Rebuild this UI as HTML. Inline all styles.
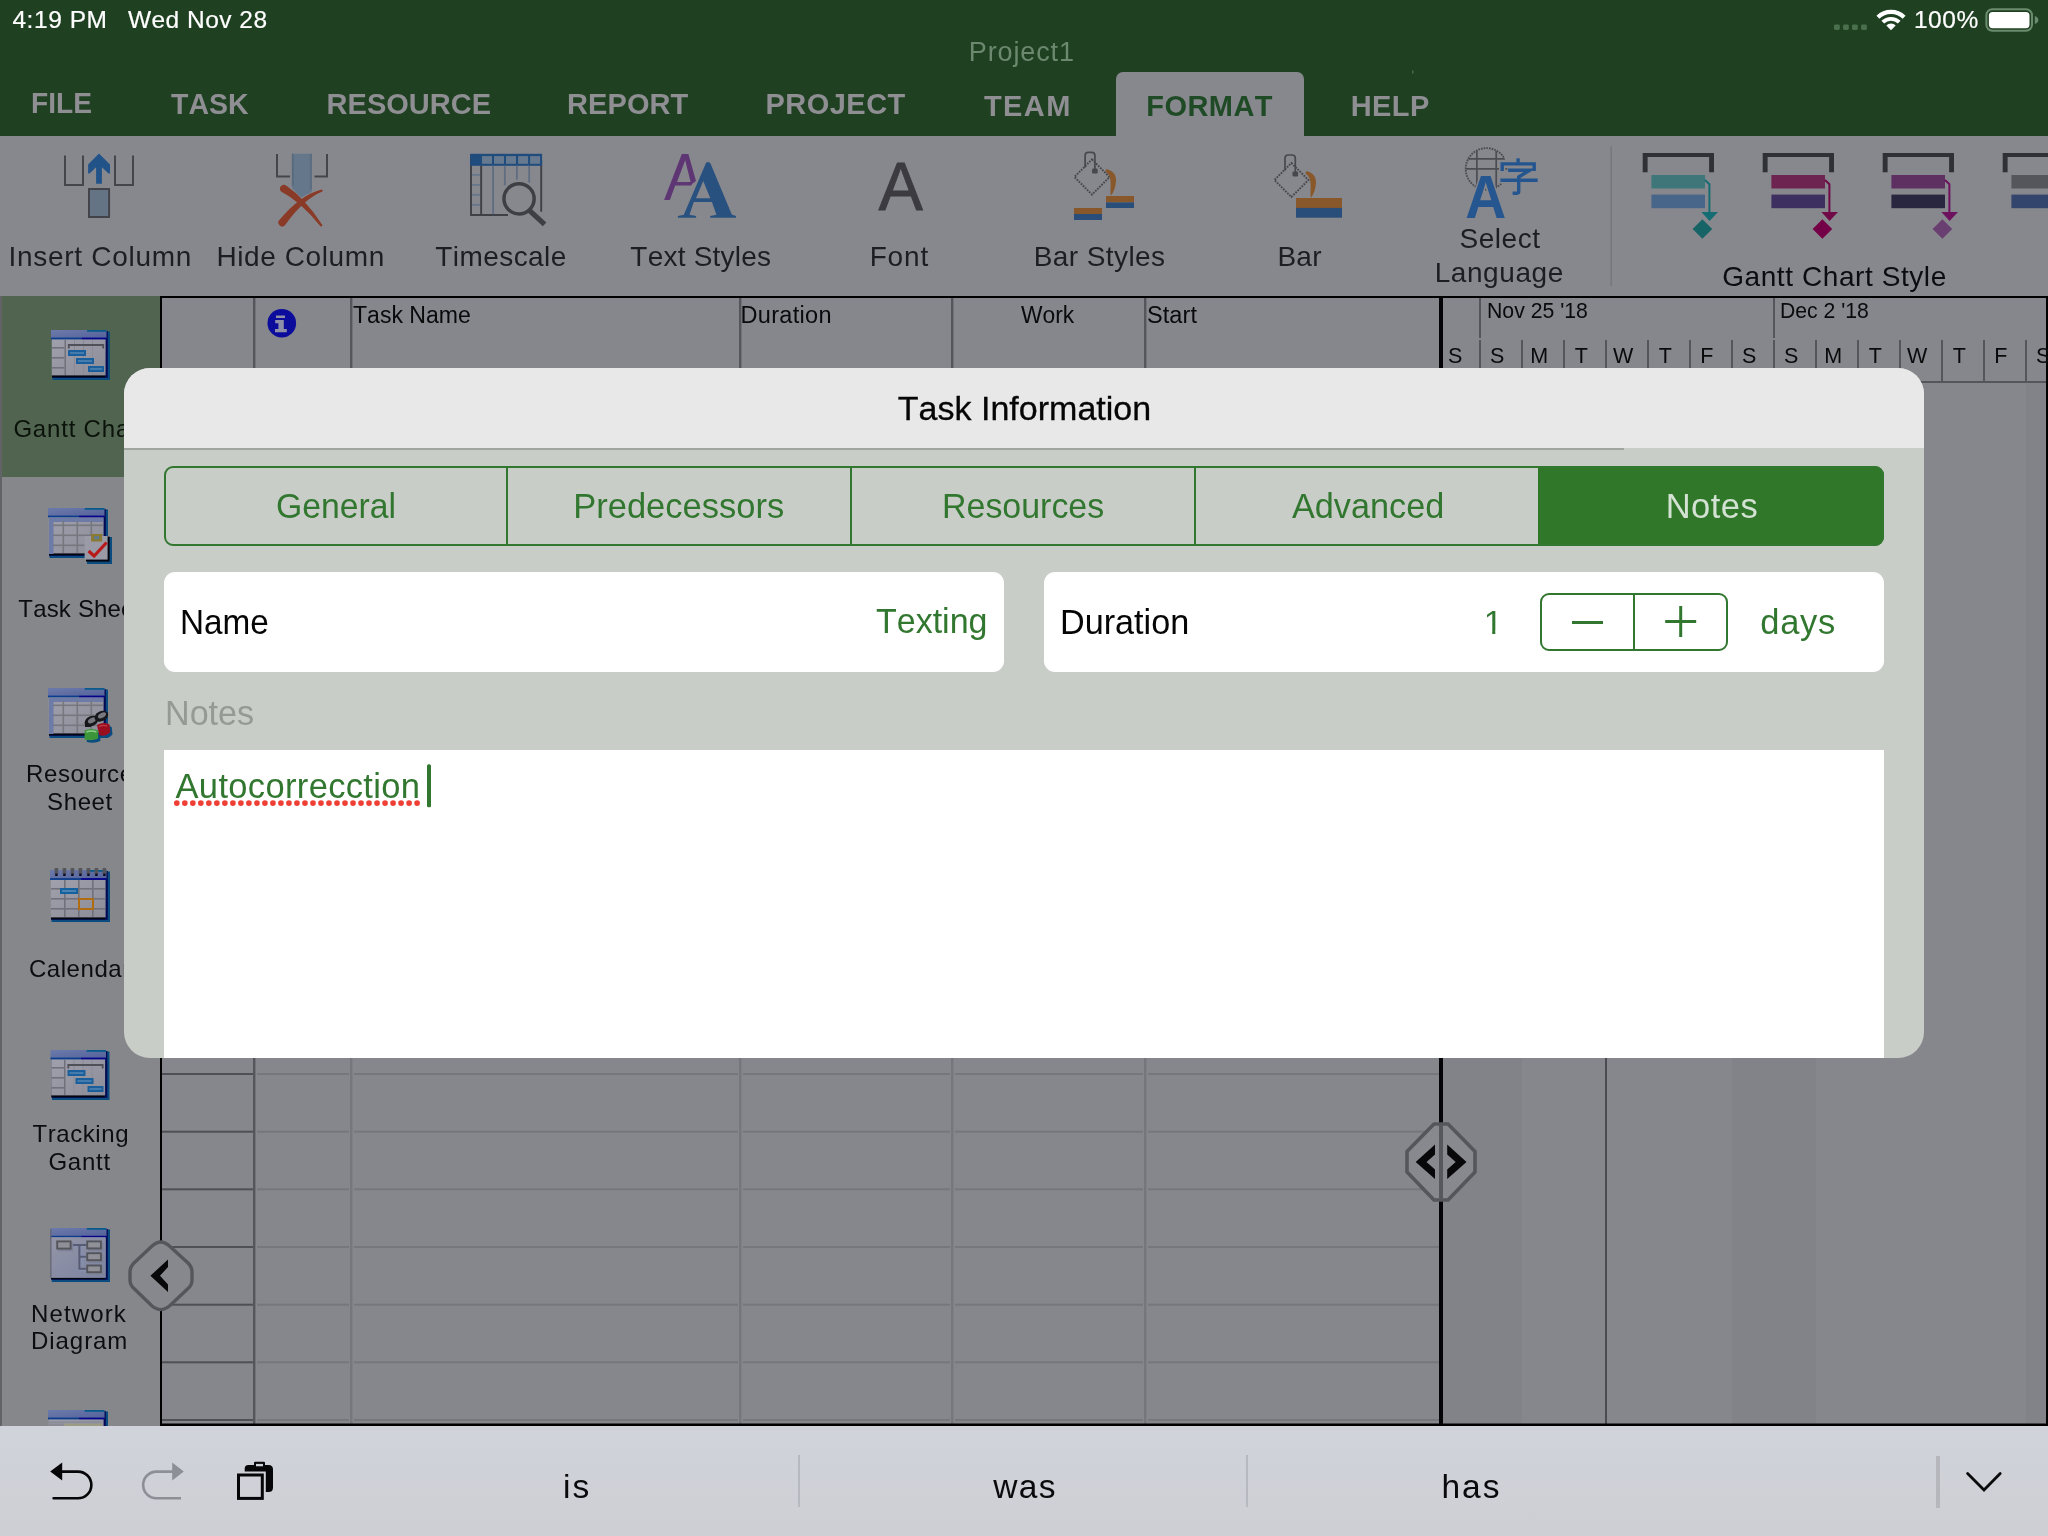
<!DOCTYPE html>
<html lang="en"><head><meta charset="utf-8">
<title>Project1 - Task Information</title>
<style>
html,body{margin:0;padding:0;background:#86878c;}
body{width:2048px;height:1536px;overflow:hidden;font-family:"Liberation Sans",sans-serif;font-kerning:none;}
#app{position:relative;width:2048px;height:1536px;overflow:hidden;background:#86878c;}
.t{position:absolute;white-space:nowrap;line-height:1;margin:0;padding:0;}
.abs{position:absolute;}
.layer{position:absolute;left:0;top:0;width:2048px;height:1536px;will-change:transform;}
svg{position:absolute;left:0;top:0;overflow:visible;}
#hdr{position:absolute;left:0;top:0;width:2048px;height:136px;background:#1f4122;}
#fmt{position:absolute;left:1116px;top:72px;width:188px;height:66px;background:#87888d;border-radius:7px 7px 0 0;}
#ribbon{position:absolute;left:0;top:136px;width:2048px;height:160px;background:#87888d;}
#side{position:absolute;left:0;top:296px;width:160px;height:1130px;background:#86878b;overflow:hidden;}
#sidesel{position:absolute;left:0;top:0;width:160px;height:181px;background:#506450;}
#sideedge{position:absolute;left:0;top:0;width:2px;height:1130px;background:#626367;}
#modal{position:absolute;left:124px;top:368px;width:1800px;height:690px;border-radius:26px;background:#c9cdc8;overflow:hidden;}
#mhead{position:absolute;left:0;top:0;width:1800px;height:80px;background:#e8e8e8;}
#mline{position:absolute;left:0;top:80px;width:1500px;height:2px;background:#a1a5a0;}
#seg{position:absolute;left:40px;top:98px;width:1716px;height:75.5px;border:2px solid #32772f;border-radius:9px;}
.segd{position:absolute;top:0;width:2px;height:75.5px;background:#32772f;}
#segsel{position:absolute;left:1414px;top:98px;width:346px;height:79.5px;background:#317729;border-radius:0 9px 9px 0;}
.card{position:absolute;background:#fff;border-radius:11px;}
#notes{position:absolute;left:40px;top:382px;width:1720px;height:320px;background:#fff;}
#step{position:absolute;left:1416px;top:225px;width:184px;height:54px;border:2px solid #32772f;border-radius:9px;}
#kb{position:absolute;left:0;top:1426px;width:2048px;height:110px;background:linear-gradient(#d0d3da,#cecfd5);}

</style></head>
<body>
<div id="app">
<div class="layer">
<div id="hdr"></div>
<div id="fmt"></div>
<div id="ribbon"></div>
<div class="t" style="left:12.44px;top:8.00px;font-size:24.5px;color:#fff;letter-spacing:0.555px;-webkit-text-stroke:0.2px #fff;">4:19 PM</div>
<div class="t" style="left:127.89px;top:8.00px;font-size:24.5px;color:#fff;letter-spacing:0.485px;-webkit-text-stroke:0.2px #fff;">Wed Nov 28</div>
<div class="t" style="left:1913.93px;top:8.00px;font-size:24.5px;color:#fff;letter-spacing:0.559px;-webkit-text-stroke:0.2px #fff;">100%</div>
<div class="t" style="left:968.79px;top:39.00px;font-size:27px;color:#6c886e;letter-spacing:0.869px;">Project1</div>
<div class="t" style="left:31.12px;top:89.00px;font-size:29px;color:#8e8e93;transform:scaleX(0.9706);transform-origin:0 0;font-weight:bold;">FILE</div>
<div class="t" style="left:170.68px;top:90.00px;font-size:29px;color:#8e8e93;transform:scaleX(0.9828);transform-origin:0 0;font-weight:bold;">TASK</div>
<div class="t" style="left:326.56px;top:90.00px;font-size:29px;color:#8e8e93;letter-spacing:0.031px;font-weight:bold;">RESOURCE</div>
<div class="t" style="left:567.06px;top:90.00px;font-size:29px;color:#8e8e93;letter-spacing:0.082px;font-weight:bold;">REPORT</div>
<div class="t" style="left:765.56px;top:90.00px;font-size:29px;color:#8e8e93;letter-spacing:0.463px;font-weight:bold;">PROJECT</div>
<div class="t" style="left:983.97px;top:92.00px;font-size:29px;color:#8e8e93;letter-spacing:1.403px;font-weight:bold;">TEAM</div>
<div class="t" style="left:1146.36px;top:92.00px;font-size:29px;color:#1f4a26;letter-spacing:0.425px;font-weight:bold;">FORMAT</div>
<div class="t" style="left:1350.76px;top:92.00px;font-size:29px;color:#8e8e93;letter-spacing:0.396px;font-weight:bold;">HELP</div>
<div class="t" style="left:8.42px;top:243.00px;font-size:28px;color:#1c1e24;letter-spacing:0.718px;">Insert Column</div>
<div class="t" style="left:216.40px;top:243.00px;font-size:28px;color:#1c1e24;letter-spacing:0.597px;">Hide Column</div>
<div class="t" style="left:435.37px;top:243.00px;font-size:28px;color:#1c1e24;letter-spacing:0.411px;">Timescale</div>
<div class="t" style="left:630.37px;top:243.00px;font-size:28px;color:#1c1e24;letter-spacing:0.216px;">Text Styles</div>
<div class="t" style="left:869.70px;top:243.00px;font-size:28px;color:#1c1e24;letter-spacing:0.825px;">Font</div>
<div class="t" style="left:1033.70px;top:243.00px;font-size:28px;color:#1c1e24;letter-spacing:0.412px;">Bar Styles</div>
<div class="t" style="left:1277.40px;top:243.00px;font-size:28px;color:#1c1e24;letter-spacing:0.245px;">Bar</div>
<div class="t" style="left:1459.43px;top:225.00px;font-size:28px;color:#1c1e24;letter-spacing:0.551px;">Select</div>
<div class="t" style="left:1434.70px;top:259.00px;font-size:28px;color:#1c1e24;letter-spacing:0.566px;">Language</div>
<div class="t" style="left:1722.19px;top:263.00px;font-size:28px;color:#0c0c10;letter-spacing:0.581px;">Gantt Chart Style</div>
<div id="side"><div id="sidesel"></div><div id="sideedge"></div></div>
<div class="t" style="left:13.39px;top:417.00px;font-size:24px;color:#0a120a;letter-spacing:0.813px;">Gantt Chart</div>
<div class="t" style="left:18.36px;top:597.00px;font-size:24px;color:#0b0d10;letter-spacing:0.169px;">Task Sheet</div>
<div class="t" style="left:26.03px;top:762.00px;font-size:24px;color:#0b0d10;letter-spacing:0.617px;">Resource</div>
<div class="t" style="left:47.11px;top:790.00px;font-size:24px;color:#0b0d10;letter-spacing:0.587px;">Sheet</div>
<div class="t" style="left:28.98px;top:957.00px;font-size:24px;color:#0b0d10;letter-spacing:0.546px;">Calendar</div>
<div class="t" style="left:32.46px;top:1122.00px;font-size:24px;color:#0b0d10;letter-spacing:0.580px;">Tracking</div>
<div class="t" style="left:48.39px;top:1150.00px;font-size:24px;color:#0b0d10;letter-spacing:0.771px;">Gantt</div>
<div class="t" style="left:31.03px;top:1302.00px;font-size:24px;color:#0b0d10;letter-spacing:1.119px;">Network</div>
<div class="t" style="left:31.03px;top:1329.00px;font-size:24px;color:#0b0d10;letter-spacing:0.943px;">Diagram</div>
<svg width="2048" height="1536" viewBox="0 0 2048 1536">
<rect x="1443" y="383" width="37" height="1041" fill="#828388"/>
<rect x="1480" y="383" width="42" height="1041" fill="#828388"/>
<rect x="1732" y="383" width="42" height="1041" fill="#828388"/>
<rect x="1774" y="383" width="42" height="1041" fill="#828388"/>
<rect x="2026" y="383" width="42" height="1041" fill="#828388"/>
<rect x="162" y="438.7" width="91" height="2" fill="#4f5055"/>
<rect x="257" y="438.7" width="92" height="2" fill="#76777c"/>
<rect x="354" y="438.7" width="384" height="2" fill="#76777c"/>
<rect x="743" y="438.7" width="207" height="2" fill="#76777c"/>
<rect x="955" y="438.7" width="188" height="2" fill="#76777c"/>
<rect x="1148" y="438.7" width="291" height="2" fill="#76777c"/>
<rect x="162" y="496.3" width="91" height="2" fill="#4f5055"/>
<rect x="257" y="496.3" width="92" height="2" fill="#76777c"/>
<rect x="354" y="496.3" width="384" height="2" fill="#76777c"/>
<rect x="743" y="496.3" width="207" height="2" fill="#76777c"/>
<rect x="955" y="496.3" width="188" height="2" fill="#76777c"/>
<rect x="1148" y="496.3" width="291" height="2" fill="#76777c"/>
<rect x="162" y="554.0" width="91" height="2" fill="#4f5055"/>
<rect x="257" y="554.0" width="92" height="2" fill="#76777c"/>
<rect x="354" y="554.0" width="384" height="2" fill="#76777c"/>
<rect x="743" y="554.0" width="207" height="2" fill="#76777c"/>
<rect x="955" y="554.0" width="188" height="2" fill="#76777c"/>
<rect x="1148" y="554.0" width="291" height="2" fill="#76777c"/>
<rect x="162" y="611.7" width="91" height="2" fill="#4f5055"/>
<rect x="257" y="611.7" width="92" height="2" fill="#76777c"/>
<rect x="354" y="611.7" width="384" height="2" fill="#76777c"/>
<rect x="743" y="611.7" width="207" height="2" fill="#76777c"/>
<rect x="955" y="611.7" width="188" height="2" fill="#76777c"/>
<rect x="1148" y="611.7" width="291" height="2" fill="#76777c"/>
<rect x="162" y="669.3" width="91" height="2" fill="#4f5055"/>
<rect x="257" y="669.3" width="92" height="2" fill="#76777c"/>
<rect x="354" y="669.3" width="384" height="2" fill="#76777c"/>
<rect x="743" y="669.3" width="207" height="2" fill="#76777c"/>
<rect x="955" y="669.3" width="188" height="2" fill="#76777c"/>
<rect x="1148" y="669.3" width="291" height="2" fill="#76777c"/>
<rect x="162" y="727.0" width="91" height="2" fill="#4f5055"/>
<rect x="257" y="727.0" width="92" height="2" fill="#76777c"/>
<rect x="354" y="727.0" width="384" height="2" fill="#76777c"/>
<rect x="743" y="727.0" width="207" height="2" fill="#76777c"/>
<rect x="955" y="727.0" width="188" height="2" fill="#76777c"/>
<rect x="1148" y="727.0" width="291" height="2" fill="#76777c"/>
<rect x="162" y="784.7" width="91" height="2" fill="#4f5055"/>
<rect x="257" y="784.7" width="92" height="2" fill="#76777c"/>
<rect x="354" y="784.7" width="384" height="2" fill="#76777c"/>
<rect x="743" y="784.7" width="207" height="2" fill="#76777c"/>
<rect x="955" y="784.7" width="188" height="2" fill="#76777c"/>
<rect x="1148" y="784.7" width="291" height="2" fill="#76777c"/>
<rect x="162" y="842.3" width="91" height="2" fill="#4f5055"/>
<rect x="257" y="842.3" width="92" height="2" fill="#76777c"/>
<rect x="354" y="842.3" width="384" height="2" fill="#76777c"/>
<rect x="743" y="842.3" width="207" height="2" fill="#76777c"/>
<rect x="955" y="842.3" width="188" height="2" fill="#76777c"/>
<rect x="1148" y="842.3" width="291" height="2" fill="#76777c"/>
<rect x="162" y="900.0" width="91" height="2" fill="#4f5055"/>
<rect x="257" y="900.0" width="92" height="2" fill="#76777c"/>
<rect x="354" y="900.0" width="384" height="2" fill="#76777c"/>
<rect x="743" y="900.0" width="207" height="2" fill="#76777c"/>
<rect x="955" y="900.0" width="188" height="2" fill="#76777c"/>
<rect x="1148" y="900.0" width="291" height="2" fill="#76777c"/>
<rect x="162" y="957.7" width="91" height="2" fill="#4f5055"/>
<rect x="257" y="957.7" width="92" height="2" fill="#76777c"/>
<rect x="354" y="957.7" width="384" height="2" fill="#76777c"/>
<rect x="743" y="957.7" width="207" height="2" fill="#76777c"/>
<rect x="955" y="957.7" width="188" height="2" fill="#76777c"/>
<rect x="1148" y="957.7" width="291" height="2" fill="#76777c"/>
<rect x="162" y="1015.3" width="91" height="2" fill="#4f5055"/>
<rect x="257" y="1015.3" width="92" height="2" fill="#76777c"/>
<rect x="354" y="1015.3" width="384" height="2" fill="#76777c"/>
<rect x="743" y="1015.3" width="207" height="2" fill="#76777c"/>
<rect x="955" y="1015.3" width="188" height="2" fill="#76777c"/>
<rect x="1148" y="1015.3" width="291" height="2" fill="#76777c"/>
<rect x="162" y="1073.0" width="91" height="2" fill="#4f5055"/>
<rect x="257" y="1073.0" width="92" height="2" fill="#76777c"/>
<rect x="354" y="1073.0" width="384" height="2" fill="#76777c"/>
<rect x="743" y="1073.0" width="207" height="2" fill="#76777c"/>
<rect x="955" y="1073.0" width="188" height="2" fill="#76777c"/>
<rect x="1148" y="1073.0" width="291" height="2" fill="#76777c"/>
<rect x="162" y="1130.7" width="91" height="2" fill="#4f5055"/>
<rect x="257" y="1130.7" width="92" height="2" fill="#76777c"/>
<rect x="354" y="1130.7" width="384" height="2" fill="#76777c"/>
<rect x="743" y="1130.7" width="207" height="2" fill="#76777c"/>
<rect x="955" y="1130.7" width="188" height="2" fill="#76777c"/>
<rect x="1148" y="1130.7" width="291" height="2" fill="#76777c"/>
<rect x="162" y="1188.3" width="91" height="2" fill="#4f5055"/>
<rect x="257" y="1188.3" width="92" height="2" fill="#76777c"/>
<rect x="354" y="1188.3" width="384" height="2" fill="#76777c"/>
<rect x="743" y="1188.3" width="207" height="2" fill="#76777c"/>
<rect x="955" y="1188.3" width="188" height="2" fill="#76777c"/>
<rect x="1148" y="1188.3" width="291" height="2" fill="#76777c"/>
<rect x="162" y="1246.0" width="91" height="2" fill="#4f5055"/>
<rect x="257" y="1246.0" width="92" height="2" fill="#76777c"/>
<rect x="354" y="1246.0" width="384" height="2" fill="#76777c"/>
<rect x="743" y="1246.0" width="207" height="2" fill="#76777c"/>
<rect x="955" y="1246.0" width="188" height="2" fill="#76777c"/>
<rect x="1148" y="1246.0" width="291" height="2" fill="#76777c"/>
<rect x="162" y="1303.7" width="91" height="2" fill="#4f5055"/>
<rect x="257" y="1303.7" width="92" height="2" fill="#76777c"/>
<rect x="354" y="1303.7" width="384" height="2" fill="#76777c"/>
<rect x="743" y="1303.7" width="207" height="2" fill="#76777c"/>
<rect x="955" y="1303.7" width="188" height="2" fill="#76777c"/>
<rect x="1148" y="1303.7" width="291" height="2" fill="#76777c"/>
<rect x="162" y="1361.3" width="91" height="2" fill="#4f5055"/>
<rect x="257" y="1361.3" width="92" height="2" fill="#76777c"/>
<rect x="354" y="1361.3" width="384" height="2" fill="#76777c"/>
<rect x="743" y="1361.3" width="207" height="2" fill="#76777c"/>
<rect x="955" y="1361.3" width="188" height="2" fill="#76777c"/>
<rect x="1148" y="1361.3" width="291" height="2" fill="#76777c"/>
<rect x="162" y="1419.0" width="91" height="2" fill="#4f5055"/>
<rect x="257" y="1419.0" width="92" height="2" fill="#76777c"/>
<rect x="354" y="1419.0" width="384" height="2" fill="#76777c"/>
<rect x="743" y="1419.0" width="207" height="2" fill="#76777c"/>
<rect x="955" y="1419.0" width="188" height="2" fill="#76777c"/>
<rect x="1148" y="1419.0" width="291" height="2" fill="#76777c"/>
<rect x="162" y="381" width="1277" height="2" fill="#76777c"/>
<rect x="1443" y="381" width="603" height="2" fill="#55565b"/>
<rect x="253" y="298" width="2.4" height="1126" fill="#55565b"/>
<rect x="350" y="298" width="2.4" height="84" fill="#55565b"/>
<rect x="350" y="382" width="2.4" height="1042" fill="#76777c"/>
<rect x="739" y="298" width="2.4" height="84" fill="#55565b"/>
<rect x="739" y="382" width="2.4" height="1042" fill="#76777c"/>
<rect x="951" y="298" width="2.4" height="84" fill="#55565b"/>
<rect x="951" y="382" width="2.4" height="1042" fill="#76777c"/>
<rect x="1144" y="298" width="2.4" height="84" fill="#55565b"/>
<rect x="1144" y="382" width="2.4" height="1042" fill="#76777c"/>
<rect x="1479" y="298" width="2" height="40" fill="#55565b"/>
<rect x="1773" y="298" width="2" height="40" fill="#55565b"/>
<rect x="1479" y="340" width="2" height="42" fill="#55565b"/>
<rect x="1521" y="340" width="2" height="42" fill="#55565b"/>
<rect x="1563" y="340" width="2" height="42" fill="#55565b"/>
<rect x="1605" y="340" width="2" height="42" fill="#55565b"/>
<rect x="1647" y="340" width="2" height="42" fill="#55565b"/>
<rect x="1689" y="340" width="2" height="42" fill="#55565b"/>
<rect x="1731" y="340" width="2" height="42" fill="#55565b"/>
<rect x="1773" y="340" width="2" height="42" fill="#55565b"/>
<rect x="1815" y="340" width="2" height="42" fill="#55565b"/>
<rect x="1857" y="340" width="2" height="42" fill="#55565b"/>
<rect x="1899" y="340" width="2" height="42" fill="#55565b"/>
<rect x="1941" y="340" width="2" height="42" fill="#55565b"/>
<rect x="1983" y="340" width="2" height="42" fill="#55565b"/>
<rect x="2025" y="340" width="2" height="42" fill="#55565b"/>
<rect x="1605" y="383" width="2" height="1041" fill="#4a4b50"/>
<rect x="160" y="296" width="1888" height="2" fill="#000"/>
<rect x="160" y="296" width="2" height="1130" fill="#000"/>
<rect x="2046" y="296" width="2" height="1130" fill="#000"/>
<rect x="160" y="1423.5" width="1888" height="2.5" fill="#000"/>
<rect x="1439" y="298" width="4" height="1126" fill="#050507"/>
<circle cx="281.8" cy="323.2" r="14.3" fill="#0c0c9c"/>
<path d="M276 315.5h9v2.6h-9z M275.2 320h8.6v9h3v3.2h-11.8v-3.2h3.4v-5.8h-3.2z" fill="#8e8fa8"/>
<g fill="none" stroke="#45464c" stroke-width="2">
<path d="M65 155.5 V185 H83 V155.5"/><path d="M115 155.5 V185 H133 V155.5"/>
</g>
<path d="M99 153.5 L110 164.6 V173.6 H108.6 L101.9 167.3 V183.8 H96.1 V167.3 L89.5 173.6 H88.1 V164.6 Z" fill="#225388"/>
<rect x="89" y="189" width="20.1" height="28" fill="#657484" stroke="#404248" stroke-width="1.9"/>
<g fill="none" stroke="#45464c" stroke-width="2">
<path d="M277 154 V176.4 H290"/><path d="M327 154 V176.4 H314.5"/>
</g>
<defs><linearGradient id="hc" x1="0" x2="1"><stop offset="0" stop-color="#66788c"/><stop offset="1" stop-color="#7d8a9a"/></linearGradient></defs>
<path d="M291.9 153.8 H311.8 V192 L301 197.5 L291.9 188 Z" fill="#64778b"/>
<rect x="291.9" y="153.8" width="1.8" height="32" fill="#586a7d"/><rect x="309.8" y="153.8" width="2" height="36" fill="#5d6d80"/>
<path d="M286.4 185.8 Q304.2 197.7 322 224.4 A1.2 1.2 0 0 1 320.4 226.2 Q300.7 201.4 281 191.4 A3.9 3.9 0 0 1 286.4 185.8 Z" fill="#893b28"/><path d="M279.8 219.6 Q300.2 195.3 320.7 189.8 A1.2 1.2 0 0 1 322.3 191.6 Q303.5 199.2 284.8 225.6 A3.9 3.9 0 0 1 279.8 219.6 Z" fill="#893b28"/>
<path d="M508 215 H471 V154.8 M541.2 160 V211.8" fill="none" stroke="#3f4046" stroke-width="1.9"/>
<rect x="470.1" y="153.8" width="72" height="12" fill="#204b7d"/>
<rect x="482.0" y="156.1" width="10" height="7.7" fill="#67798f"/>
<rect x="494.0" y="156.1" width="10" height="7.7" fill="#67798f"/>
<rect x="506.0" y="156.1" width="10" height="7.7" fill="#67798f"/>
<rect x="518.1" y="156.1" width="10" height="7.7" fill="#67798f"/>
<rect x="530.1" y="156.1" width="10" height="7.7" fill="#67798f"/>
<rect x="480.2" y="165.8" width="1.9" height="49" fill="#3f4046"/>
<rect x="492.2" y="165.8" width="1.8" height="48.4" fill="#5f6d82"/>
<rect x="503.9" y="165.8" width="1.8" height="19.6" fill="#5f6d82"/>
<rect x="516.0" y="165.8" width="1.8" height="13.8" fill="#5f6d82"/>
<rect x="528.3" y="165.8" width="1.8" height="16.7" fill="#5f6d82"/>
<rect x="472" y="174.0" width="8" height="1.8" fill="#66778c"/>
<rect x="472" y="184.0" width="8" height="1.8" fill="#66778c"/>
<rect x="472" y="193.9" width="8" height="1.8" fill="#66778c"/>
<rect x="472" y="203.9" width="8" height="1.8" fill="#66778c"/>
<circle cx="519.05" cy="198.8" r="15.1" fill="#87888d" stroke="#3e3f45" stroke-width="3.5"/>
<path d="M529.6 210.6 L544.6 224.4" stroke="#3e3f45" stroke-width="5.2" fill="none"/>
<path d="M664.1 199.9 L681.8 154.1 H688.4 L696 181 L692 184 L691.4 185.6 H675.2 L669.9 199.9 Z M677 181.9 H690.6 L685.2 160.2 Z" fill="#5f3674" fill-rule="evenodd"/>
<path d="M707.9 161.9 L710.3 163.0 L731.8 214.5 L736.0 215.9 L736.0 217.8 L710.2 217.8 L710.2 216.0 L716.4 214.7 L711.9 201.9 L693.8 201.9 L689.5 214.7 L696.1 216.0 L696.1 217.8 L677.9 217.8 L677.9 216.0 L683.8 214.7 L706.2 162.4 Z M703.2 180.9 L710.3 198.2 L696.0 198.2 Z" fill="#29517f" fill-rule="evenodd" stroke="#87888d" stroke-width="1.6" paint-order="stroke"/>
<text x="878.6" y="209.8" font-family="Liberation Sans,sans-serif" font-size="68.5" fill="#3b3b40" stroke="#3b3b40" stroke-width="0.8" textLength="44.4" lengthAdjust="spacingAndGlyphs">A</text>
<path d="M1092.0 159.4 L1109.6 177.0 L1092.0 194.6 L1074.4 177.0 Z" fill="none" stroke="#45464b" stroke-width="1.9" stroke-dasharray="1.7 1.2"/>
<path d="M1085.1 167.5 V155.6 Q1085.1 152.4 1088.3 152.4 H1091.7 Q1094.9 152.4 1094.9 155.6 V172.0" fill="none" stroke="#47484e" stroke-width="1.7"/>
<rect x="1092.1" y="168.4" width="5.6" height="5" rx="1.2" fill="#47484e"/>
<path d="M1106 169.2 C1111 169.5 1116.5 173.5 1116 181 C1115.6 187 1113.8 192 1111 195.6 C1110 193 1110.8 187 1110.6 182 C1110.4 177 1108.5 173.5 1105.6 171.8 Z" fill="#88572a"/>
<rect x="1106" y="196" width="28" height="6.4" fill="#88572a"/><rect x="1106" y="202.4" width="28" height="5.6" fill="#294e7a"/>
<rect x="1074" y="208" width="28" height="6" fill="#88572a"/><rect x="1074" y="214" width="28" height="6" fill="#294e7a"/>
<path d="M1291.4 163.0 L1308.4 180.0 L1291.4 197.0 L1274.4 180.0 Z" fill="none" stroke="#45464b" stroke-width="1.9" stroke-dasharray="1.7 1.2"/>
<path d="M1285.0 170.5 V158.2 Q1285.0 155.0 1288.2 155.0 H1292.1 Q1295.3 155.0 1295.3 158.2 V175.0" fill="none" stroke="#47484e" stroke-width="1.7"/>
<rect x="1292.5" y="171.4" width="5.6" height="5" rx="1.2" fill="#47484e"/>
<path d="M1306 171.2 C1311 171.5 1316.5 175.5 1316 183 C1315.6 189 1313.8 194 1311 197.8 C1310 195 1310.8 189 1310.6 184 C1310.4 179 1308.5 175.5 1305.6 173.8 Z" fill="#88572a"/>
<rect x="1296" y="198" width="46" height="10" fill="#88572a"/><rect x="1296" y="207.9" width="46" height="9.8" fill="#294e7a"/>
<clipPath id="gl"><rect x="1460" y="140" width="44.5" height="60"/></clipPath><circle cx="1486.5" cy="168.9" r="20.8" fill="none" stroke="#4b4c51" stroke-width="1.9" stroke-dasharray="1.7 1" clip-path="url(#gl)"/>
<path d="M1476.9 151 V187 M1496.2 151 V187 M1468.5 158.8 H1504.5 M1465.6 168.9 H1507.4" fill="none" stroke="#4c4d52" stroke-width="1.7"/>
<text x="1465.2" y="217.6" font-family="Liberation Sans,sans-serif" font-weight="bold" font-size="60.5" fill="#26568f" stroke="#87888d" stroke-width="3" paint-order="stroke" textLength="41" lengthAdjust="spacingAndGlyphs">A</text>
<g fill="none" stroke="#87888d" stroke-width="6.4"><path d="M1518.1 158.3 V164"/><path d="M1502.2 171 V163.9 H1534.2 V171"/><path d="M1508.1 170.3 H1529.7 L1518.7 177 V191.6 Q1518.7 193.2 1517 193.2 H1512.6"/><path d="M1500.4 180.2 H1537.7"/></g>
<g fill="none" stroke="#25558e" stroke-width="3.4"><path d="M1518.1 158.3 V164"/><path d="M1502.2 171 V163.9 H1534.2 V171"/><path d="M1508.1 170.3 H1529.7 L1518.7 177 V191.6 Q1518.7 193.2 1517 193.2 H1512.6"/><path d="M1500.4 180.2 H1537.7"/></g>
<rect x="1610.4" y="146.5" width="1.6" height="139.5" fill="#77787d"/>
<path d="M1642.7 172.3 V153.1 H1714.0 V172.3 H1709.1 V157.1 H1647.6 V172.3 Z" fill="#303136"/>
<rect x="1651.4" y="175" width="53.6" height="13.5" fill="#3e7679"/>
<rect x="1651.4" y="194.6" width="53.6" height="13.6" fill="#48658a"/>
<path d="M1705.0 180 L1709.4 184.2 V213" fill="none" stroke="#146d72" stroke-width="2"/>
<path d="M1701.4 212 H1718.0 L1709.6 221 Z" fill="#146d72"/>
<path d="M1702.4 219.2 L1712.2 229 L1702.4 238.8 L1692.6 229 Z" fill="#176466"/>
<path d="M1762.7 172.3 V153.1 H1834.0 V172.3 H1829.1 V157.1 H1767.6 V172.3 Z" fill="#303136"/>
<rect x="1771.4" y="175" width="53.6" height="13.5" fill="#6e2450"/>
<rect x="1771.4" y="194.6" width="53.6" height="13.6" fill="#3d2f60"/>
<path d="M1825.0 180 L1829.4 184.2 V213" fill="none" stroke="#700a47" stroke-width="2"/>
<path d="M1821.4 212 H1838.0 L1829.6 221 Z" fill="#700a47"/>
<path d="M1822.4 219.2 L1832.2 229 L1822.4 238.8 L1812.6 229 Z" fill="#740047"/>
<path d="M1882.7 172.3 V153.1 H1954.0 V172.3 H1949.1 V157.1 H1887.6 V172.3 Z" fill="#303136"/>
<rect x="1891.4" y="175" width="53.6" height="13.5" fill="#5d3061"/>
<rect x="1891.4" y="194.6" width="53.6" height="13.6" fill="#28273f"/>
<path d="M1945.0 180 L1949.4 184.2 V213" fill="none" stroke="#6e125f" stroke-width="2"/>
<path d="M1941.4 212 H1958.0 L1949.6 221 Z" fill="#6e125f"/>
<path d="M1942.4 219.2 L1952.2 229 L1942.4 238.8 L1932.6 229 Z" fill="#693e71"/>
<path d="M2002.7 172.3 V153.1 H2074.0 V172.3 H2069.1 V157.1 H2007.6 V172.3 Z" fill="#303136"/>
<rect x="2011.4" y="175" width="53.6" height="13.5" fill="#55565b"/>
<rect x="2011.4" y="194.6" width="53.6" height="13.6" fill="#33456c"/>
<path d="M2065.0 180 L2069.4 184.2 V213" fill="none" stroke="#333" stroke-width="2"/>
<path d="M2061.4 212 H2078.0 L2069.6 221 Z" fill="#333"/>
<path d="M2062.4 219.2 L2072.2 229 L2062.4 238.8 L2052.6 229 Z" fill="#333"/>
<defs><linearGradient id="wbody" x1="0" y1="0" x2="1" y2="1"><stop offset="0" stop-color="#9fa0ab"/><stop offset="1" stop-color="#8c8d98"/></linearGradient>
<linearGradient id="wtitle" x1="0" y1="0" x2="1" y2="1"><stop offset="0" stop-color="#6c7aab"/><stop offset="1" stop-color="#54629a"/></linearGradient>
<linearGradient id="nbody" x1="0" y1="0" x2="1" y2="1"><stop offset="0" stop-color="#9495a6"/><stop offset="1" stop-color="#7c84a2"/></linearGradient></defs>
<rect x="52.5" y="331.5" width="57.5" height="48.5" fill="#0b4c80"/>
<rect x="52.0" y="331.0" width="55.8" height="46.8" fill="#050a55"/>
<rect x="52.0" y="375.0" width="53.0" height="2.2" fill="#05050f"/>
<rect x="51.8" y="339.0" width="53.8" height="36.4" fill="url(#wbody)"/>
<rect x="51.0" y="330.0" width="55.5" height="8.4" fill="url(#wtitle)"/>
<rect x="51.0" y="337.6" width="30.5" height="1.8" fill="#0b3d8c"/>
<rect x="81.5" y="337.6" width="25.0" height="1.8" fill="#04048a"/>
<rect x="87.1" y="330.0" width="19.4" height="1.8" fill="#0b5a8c"/>
<rect x="64.5" y="340.0" width="1.5" height="35" fill="#70717a"/>
<rect x="52.0" y="347.0" width="12.5" height="1.6" fill="#70717a"/>
<rect x="52.0" y="357.0" width="12.5" height="1.6" fill="#70717a"/>
<rect x="52.0" y="367.0" width="12.5" height="1.6" fill="#70717a"/>
<rect x="74.0" y="340.0" width="1" height="35" fill="#8a8b96"/>
<rect x="83.0" y="340.0" width="1" height="35" fill="#8a8b96"/>
<rect x="92.0" y="340.0" width="1" height="35" fill="#8a8b96"/>
<path d="M68.8 348.5 V345.0 H103.2 V348.5" fill="none" stroke="#505058" stroke-width="1.8"/>
<rect x="68.0" y="350.0" width="18" height="6" fill="#1a5f9b"/>
<rect x="70.0" y="352.2" width="14" height="1.6" fill="#4f84b2"/>
<rect x="76.0" y="358.0" width="18" height="6" fill="#1a5f9b"/>
<rect x="78.0" y="360.2" width="14" height="1.6" fill="#4f84b2"/>
<rect x="88.0" y="366.0" width="16" height="6" fill="#1a5f9b"/>
<rect x="90.0" y="368.2" width="12" height="1.6" fill="#4f84b2"/>
<rect x="49.5" y="509.5" width="58.5" height="48.5" fill="#0b4c80"/>
<rect x="49.0" y="509.0" width="56.8" height="46.8" fill="#050a55"/>
<rect x="49.0" y="553.0" width="54.0" height="2.2" fill="#05050f"/>
<rect x="48.8" y="517.0" width="54.8" height="36.4" fill="url(#wbody)"/>
<rect x="48.0" y="508.0" width="56.5" height="8.4" fill="url(#wtitle)"/>
<rect x="48.0" y="515.6" width="31.1" height="1.8" fill="#0b3d8c"/>
<rect x="79.1" y="515.6" width="25.4" height="1.8" fill="#04048a"/>
<rect x="84.7" y="508.0" width="19.8" height="1.8" fill="#0b5a8c"/>
<rect x="49.0" y="518.0" width="54" height="4" fill="#6d7ba6"/>
<rect x="49.0" y="518.0" width="4.5" height="36" fill="#6d7ba6"/>
<rect x="62.5" y="521.0" width="1.6" height="32" fill="#77787f"/>
<rect x="76.5" y="521.0" width="1.6" height="32" fill="#77787f"/>
<rect x="90.5" y="521.0" width="1.6" height="32" fill="#77787f"/>
<rect x="53.0" y="524.5" width="50" height="1.6" fill="#77787f"/>
<rect x="53.0" y="534.5" width="50" height="1.6" fill="#77787f"/>
<rect x="53.0" y="544.5" width="50" height="1.6" fill="#77787f"/>
<rect x="87.0" y="537.0" width="25" height="27" fill="#0b4c80"/>
<rect x="86.0" y="536.6" width="23.6" height="25" fill="#05050f"/>
<rect x="84.6" y="536.0" width="23" height="23.6" fill="#9a9ba7"/>
<rect x="91.1" y="534.0" width="11" height="7.5" fill="#8a7a32"/>
<rect x="94.1" y="536.2" width="5" height="3" fill="#5c7a96"/>
<path d="M88.6 551.0 L94.1 556.0 L106.6 542.5" fill="none" stroke="#b81a1a" stroke-width="3.2"/>
<rect x="49.5" y="689.5" width="58.5" height="48.5" fill="#0b4c80"/>
<rect x="49.0" y="689.0" width="56.8" height="46.8" fill="#050a55"/>
<rect x="49.0" y="733.0" width="54.0" height="2.2" fill="#05050f"/>
<rect x="48.8" y="697.0" width="54.8" height="36.4" fill="url(#wbody)"/>
<rect x="48.0" y="688.0" width="56.5" height="8.4" fill="url(#wtitle)"/>
<rect x="48.0" y="695.6" width="31.1" height="1.8" fill="#0b3d8c"/>
<rect x="79.1" y="695.6" width="25.4" height="1.8" fill="#04048a"/>
<rect x="84.7" y="688.0" width="19.8" height="1.8" fill="#0b5a8c"/>
<rect x="49.0" y="698.0" width="54" height="4" fill="#6d7ba6"/>
<rect x="49.0" y="698.0" width="4.5" height="36" fill="#6d7ba6"/>
<rect x="62.5" y="701.0" width="1.6" height="32" fill="#77787f"/>
<rect x="76.5" y="701.0" width="1.6" height="32" fill="#77787f"/>
<rect x="90.5" y="701.0" width="1.6" height="32" fill="#77787f"/>
<rect x="53.0" y="704.5" width="50" height="1.6" fill="#77787f"/>
<rect x="53.0" y="714.5" width="50" height="1.6" fill="#77787f"/>
<rect x="53.0" y="724.5" width="50" height="1.6" fill="#77787f"/>
<path d="M99.2 727.4 q6 -3.5 12.5 -0.5 l0.8 7.5 q-4 5 -11 3.2 z" fill="#0b4c80"/>
<path d="M86.8 732.9 q6.5 -3 13.5 0 l0 8 q-6 3 -13.5 1 z" fill="#0b4c80"/>
<ellipse cx="91.4" cy="721.2" rx="7.2" ry="5" fill="#17171b" transform="rotate(-28 91.4 721.2)"/>
<ellipse cx="92.0" cy="720.4" rx="4.4" ry="2.4" fill="#77787f" transform="rotate(-28 92.0 720.4)"/>
<ellipse cx="101.4" cy="716.2" rx="7.2" ry="5" fill="#17171b" transform="rotate(-28 101.4 716.2)"/>
<ellipse cx="102.0" cy="715.4" rx="4.4" ry="2.4" fill="#77787f" transform="rotate(-28 102.0 715.4)"/>
<rect x="85.0" y="724.0" width="6" height="3" fill="#17171b"/>
<path d="M97.0 725.0 q6 -3.5 12.5 -0.5 l0.8 7.5 q-4 5 -11 3.2 z" fill="#9a0f20"/>
<path d="M99.0 726.6 q4 -2 8 -0.5" fill="none" stroke="#c23a48" stroke-width="1.3"/>
<path d="M84.6 730.5 q6.5 -3 13.5 0 l0 8 q-6 3 -13.5 1 z" fill="#3c9639"/>
<path d="M86.4 732.0 q5 -2 10 0" fill="none" stroke="#8fce88" stroke-width="1.4"/>
<rect x="51.5" y="871.5" width="58.5" height="50.5" fill="#0b4c80"/>
<rect x="51.0" y="871.0" width="56.8" height="48.8" fill="#050a55"/>
<rect x="51.0" y="917.0" width="54.0" height="2.2" fill="#05050f"/>
<rect x="50.8" y="879.5" width="54.8" height="37.9" fill="url(#wbody)"/>
<rect x="50.0" y="870.0" width="56.5" height="8.9" fill="url(#wtitle)"/>
<rect x="50.0" y="878.1" width="31.1" height="1.8" fill="#0b3d8c"/>
<rect x="81.1" y="878.1" width="25.4" height="1.8" fill="#04048a"/>
<rect x="86.7" y="870.0" width="19.8" height="1.8" fill="#0b5a8c"/>
<rect x="54.6" y="868.0" width="3.6" height="6" fill="#55565c"/>
<rect x="55.2" y="873.6" width="2.4" height="2.4" fill="#0a0a20"/>
<rect x="62.6" y="868.0" width="3.6" height="6" fill="#55565c"/>
<rect x="63.2" y="873.6" width="2.4" height="2.4" fill="#0a0a20"/>
<rect x="70.6" y="868.0" width="3.6" height="6" fill="#55565c"/>
<rect x="71.2" y="873.6" width="2.4" height="2.4" fill="#0a0a20"/>
<rect x="78.6" y="868.0" width="3.6" height="6" fill="#55565c"/>
<rect x="79.2" y="873.6" width="2.4" height="2.4" fill="#0a0a20"/>
<rect x="86.6" y="868.0" width="3.6" height="6" fill="#55565c"/>
<rect x="87.2" y="873.6" width="2.4" height="2.4" fill="#0a0a20"/>
<rect x="94.6" y="868.0" width="3.6" height="6" fill="#55565c"/>
<rect x="95.2" y="873.6" width="2.4" height="2.4" fill="#0a0a20"/>
<rect x="102.6" y="868.0" width="3.6" height="6" fill="#55565c"/>
<rect x="103.2" y="873.6" width="2.4" height="2.4" fill="#0a0a20"/>
<rect x="64.0" y="880.0" width="1.6" height="37" fill="#70717a"/>
<rect x="78.0" y="880.0" width="1.6" height="37" fill="#70717a"/>
<rect x="92.0" y="880.0" width="1.6" height="37" fill="#70717a"/>
<rect x="51.0" y="888.0" width="54" height="1.6" fill="#70717a"/>
<rect x="51.0" y="898.0" width="54" height="1.6" fill="#70717a"/>
<rect x="51.0" y="908.0" width="54" height="1.6" fill="#70717a"/>
<rect x="60.0" y="888.0" width="18" height="6" fill="#14619f"/><rect x="62.0" y="890.2" width="14" height="1.6" fill="#5a8ab8"/>
<rect x="79.0" y="899.0" width="14" height="10" fill="none" stroke="#b06c12" stroke-width="2"/>
<rect x="52.0" y="1051.5" width="57.5" height="48.5" fill="#0b4c80"/>
<rect x="51.5" y="1051.0" width="55.8" height="46.8" fill="#050a55"/>
<rect x="51.5" y="1095.0" width="53.0" height="2.2" fill="#05050f"/>
<rect x="51.3" y="1059.0" width="53.8" height="36.4" fill="url(#wbody)"/>
<rect x="50.5" y="1050.0" width="55.5" height="8.4" fill="url(#wtitle)"/>
<rect x="50.5" y="1057.6" width="30.5" height="1.8" fill="#0b3d8c"/>
<rect x="81.0" y="1057.6" width="25.0" height="1.8" fill="#04048a"/>
<rect x="86.6" y="1050.0" width="19.4" height="1.8" fill="#0b5a8c"/>
<rect x="64.0" y="1060.0" width="1.5" height="35" fill="#70717a"/>
<rect x="51.5" y="1067.0" width="12.5" height="1.6" fill="#70717a"/>
<rect x="51.5" y="1077.0" width="12.5" height="1.6" fill="#70717a"/>
<rect x="51.5" y="1087.0" width="12.5" height="1.6" fill="#70717a"/>
<rect x="73.5" y="1060.0" width="1" height="35" fill="#8a8b96"/>
<rect x="82.5" y="1060.0" width="1" height="35" fill="#8a8b96"/>
<rect x="91.5" y="1060.0" width="1" height="35" fill="#8a8b96"/>
<path d="M68.3 1068.5 V1065.0 H102.7 V1068.5" fill="none" stroke="#505058" stroke-width="1.8"/>
<rect x="67.5" y="1070.0" width="18" height="6" fill="#1a5f9b"/>
<rect x="69.5" y="1072.2" width="14" height="1.6" fill="#4f84b2"/>
<rect x="75.5" y="1078.0" width="18" height="6" fill="#1a5f9b"/>
<rect x="77.5" y="1080.2" width="14" height="1.6" fill="#4f84b2"/>
<rect x="87.5" y="1086.0" width="16" height="6" fill="#1a5f9b"/>
<rect x="89.5" y="1088.2" width="12" height="1.6" fill="#4f84b2"/>
<rect x="51.7" y="1229.5" width="58.3" height="52.5" fill="#0b4c80"/>
<rect x="51.2" y="1229.0" width="56.6" height="50.8" fill="#050a55"/>
<rect x="51.2" y="1277.0" width="53.8" height="2.2" fill="#05050f"/>
<rect x="51.0" y="1237.2" width="54.6" height="40.2" fill="url(#wbody)"/>
<rect x="50.2" y="1228.0" width="56.3" height="8.6" fill="url(#wtitle)"/>
<rect x="50.2" y="1235.8" width="31.0" height="1.8" fill="#0b3d8c"/>
<rect x="81.2" y="1235.8" width="25.3" height="1.8" fill="#04048a"/>
<rect x="86.8" y="1228.0" width="19.7" height="1.8" fill="#0b5a8c"/>
<rect x="51.0" y="1237.2" width="54.6" height="40.6" fill="url(#nbody)"/>
<rect x="50.2" y="1229.0" width="1.3" height="49" fill="#676877"/>
<path d="M71.6 1245.6 H86.2 M80.4 1245.6 V1269.4 H86.2 M80.4 1257.3 H86.2" fill="none" stroke="#8690ad" stroke-width="4.4"/>
<path d="M71.6 1245.0 H86.2 M79.4 1245.0 V1268.8 H86.2 M79.4 1256.7 H86.2" fill="none" stroke="#585b72" stroke-width="2"/>
<rect x="57.9" y="1242.2" width="15.3" height="9.1" fill="#7e8296"/>
<rect x="57.2" y="1241.4" width="13.4" height="7.2" fill="#8f9098" stroke="#54555b" stroke-width="1.9"/>
<rect x="87.8" y="1242.2" width="15.6" height="8.9" fill="#7e8296"/>
<rect x="87.2" y="1241.4" width="13.7" height="7.0" fill="#8f9098" stroke="#54555b" stroke-width="1.9"/>
<rect x="87.8" y="1254.1" width="15.6" height="8.9" fill="#7e8296"/>
<rect x="87.2" y="1253.2" width="13.7" height="7.0" fill="#8f9098" stroke="#54555b" stroke-width="1.9"/>
<rect x="87.8" y="1266.4" width="15.6" height="8.6" fill="#7e8296"/>
<rect x="87.2" y="1265.5" width="13.7" height="6.7" fill="#8f9098" stroke="#54555b" stroke-width="1.9"/>
<g clip-path="url(#c7)"><clipPath id="c7"><rect x="0" y="1400" width="160" height="26"/></clipPath>
<rect x="49.5" y="1411.5" width="58.5" height="48.5" fill="#0b4c80"/>
<rect x="49.0" y="1411.0" width="56.8" height="46.8" fill="#050a55"/>
<rect x="49.0" y="1455.0" width="54.0" height="2.2" fill="#05050f"/>
<rect x="48.8" y="1419.0" width="54.8" height="36.4" fill="url(#wbody)"/>
<rect x="48.0" y="1410.0" width="56.5" height="8.4" fill="url(#wtitle)"/>
<rect x="48.0" y="1417.6" width="31.1" height="1.8" fill="#0b3d8c"/>
<rect x="79.1" y="1417.6" width="25.4" height="1.8" fill="#04048a"/>
<rect x="84.7" y="1410.0" width="19.8" height="1.8" fill="#0b5a8c"/>
<rect x="49" y="1421" width="53" height="2.4" fill="#8d8e9c"/>
<rect x="64.4" y="1423.6" width="38" height="3" fill="#9c9c84"/><rect x="49" y="1423.6" width="15" height="3" fill="#8a8b95"/>
</g>
<rect x="1834.0" y="24.4" width="5.8" height="5.6" rx="1.4" fill="#4a6f4d"/>
<rect x="1843.0" y="24.4" width="5.8" height="5.6" rx="1.4" fill="#4a6f4d"/>
<rect x="1852.0" y="24.4" width="5.8" height="5.6" rx="1.4" fill="#4a6f4d"/>
<rect x="1861.1" y="24.4" width="5.8" height="5.6" rx="1.4" fill="#4a6f4d"/>
<g fill="none" stroke="#fff" stroke-linecap="butt">
<path d="M1877.9 17.3 A18.6 18.6 0 0 1 1904.1 17.3" stroke-width="4.1"/>
<path d="M1882.8 22.2 A11.7 11.7 0 0 1 1899.2 22.2" stroke-width="3.9"/>
</g>
<path d="M1891 30.2 L1886.3 25.4 A6.6 6.6 0 0 1 1895.7 25.4 Z" fill="#fff"/>
<rect x="1986.4" y="9.3" width="45.6" height="21.4" rx="6" fill="none" stroke="#6b8c6e" stroke-width="2"/>
<rect x="1988.9" y="11.9" width="40.6" height="16.3" rx="3.6" fill="#fff"/>
<path d="M2034.8 15.9 Q2038.4 17.5 2038.4 19.9 Q2038.4 22.3 2034.8 23.9 Z" fill="#6b8c6e"/>
<rect x="1412" y="70.5" width="1.5" height="3" fill="#4c6c4f"/>
</svg>
<div class="t" style="left:353.48px;top:304.00px;font-size:23.5px;color:#0a0a0c;transform:scaleX(0.9809);transform-origin:0 0;">Task Name</div>
<div class="t" style="left:740.47px;top:304.00px;font-size:23.5px;color:#0a0a0c;letter-spacing:0.318px;">Duration</div>
<div class="t" style="left:1021.40px;top:304.00px;font-size:23.5px;color:#0a0a0c;transform:scaleX(0.9697);transform-origin:0 0;">Work</div>
<div class="t" style="left:1146.93px;top:304.00px;font-size:23.5px;color:#0a0a0c;letter-spacing:0.103px;">Start</div>
<div class="t" style="left:1487.01px;top:301.00px;font-size:21.5px;color:#0a0a0c;transform:scaleX(0.9883);transform-origin:0 0;">Nov 25 &#39;18</div>
<div class="t" style="left:1780.26px;top:301.00px;font-size:21.5px;color:#0a0a0c;transform:scaleX(0.9856);transform-origin:0 0;">Dec 2 &#39;18</div>
<div class="t" style="left:1448.04px;top:346.00px;font-size:21.5px;color:#0a0a0c;">S</div>
<div class="t" style="left:1490.04px;top:346.00px;font-size:21.5px;color:#0a0a0c;">S</div>
<div class="t" style="left:1530.25px;top:346.00px;font-size:21.5px;color:#0a0a0c;">M</div>
<div class="t" style="left:1574.64px;top:346.00px;font-size:21.5px;color:#0a0a0c;">T</div>
<div class="t" style="left:1613.04px;top:346.00px;font-size:21.5px;color:#0a0a0c;">W</div>
<div class="t" style="left:1658.64px;top:346.00px;font-size:21.5px;color:#0a0a0c;">T</div>
<div class="t" style="left:1700.18px;top:346.00px;font-size:21.5px;color:#0a0a0c;">F</div>
<div class="t" style="left:1742.04px;top:346.00px;font-size:21.5px;color:#0a0a0c;">S</div>
<div class="t" style="left:1784.04px;top:346.00px;font-size:21.5px;color:#0a0a0c;">S</div>
<div class="t" style="left:1824.25px;top:346.00px;font-size:21.5px;color:#0a0a0c;">M</div>
<div class="t" style="left:1868.64px;top:346.00px;font-size:21.5px;color:#0a0a0c;">T</div>
<div class="t" style="left:1907.04px;top:346.00px;font-size:21.5px;color:#0a0a0c;">W</div>
<div class="t" style="left:1952.64px;top:346.00px;font-size:21.5px;color:#0a0a0c;">T</div>
<div class="t" style="left:1994.18px;top:346.00px;font-size:21.5px;color:#0a0a0c;">F</div>
<div class="t" style="left:2036.04px;top:346.00px;font-size:21.5px;color:#0a0a0c;">S</div>
<svg width="2048" height="1536" viewBox="0 0 2048 1536">
<path d="M160.8 1242 Q165 1242 170 1246.5 L188 1263 Q192 1267 192 1272 L192 1280 Q192 1285 188 1288.5 L170 1305.5 Q165 1309.6 160.8 1309.6 Q156.5 1309.6 151.5 1305.5 L134 1288.5 Q130 1285 130 1280 L130 1272 Q130 1267 134 1263 L151.5 1246.5 Q156.5 1242 160.8 1242 Z" fill="#87888d" stroke="#55565b" stroke-width="3.4"/>
<path d="M150.4 1275.8 L168 1259.5 L168 1267 L160 1275.8 L168 1284.5 L168 1292 Z" fill="#08080a"/>
<path d="M1434 1124 L1448 1124 L1475 1151.5 L1475 1172 L1448 1200 L1434 1200 L1407 1172 L1407 1151.5 Z" fill="#88898e" stroke="#55565b" stroke-width="3.6" stroke-linejoin="round"/>
<rect x="1439" y="1124" width="4" height="76" fill="#57585d"/>
<path d="M1415.7 1162 L1435 1144.5 L1435 1154.5 L1426.5 1162 L1435 1169.5 L1435 1179 Z" fill="#08080a"/>
<path d="M1466.5 1162 L1447.2 1144.5 L1447.2 1154.5 L1455.7 1162 L1447.2 1169.5 L1447.2 1179 Z" fill="#08080a"/>
</svg>
</div>
<div class="layer">
<div id="modal">
<div id="mhead"></div><div id="mline"></div>
<div id="segsel"></div>
<div id="seg"><div class="segd" style="left:340px"></div><div class="segd" style="left:684px"></div><div class="segd" style="left:1028px"></div></div>
<div class="card" style="left:40px;top:204px;width:840px;height:100px"></div>
<div class="card" style="left:920px;top:204px;width:840px;height:100px"></div>
<div id="step"></div>
<div id="notes"></div>
</div>
<div class="t" style="left:897.74px;top:391.00px;font-size:34px;color:#060606;letter-spacing:0.018px;-webkit-text-stroke:0.3px #060606;">Task Information</div>
<div class="t" style="left:276.10px;top:489.00px;font-size:34.5px;color:#32772f;transform:scaleX(0.9773);transform-origin:0 0;">General</div>
<div class="t" style="left:573.17px;top:489.00px;font-size:34.5px;color:#32772f;letter-spacing:0.014px;">Predecessors</div>
<div class="t" style="left:941.62px;top:489.00px;font-size:34.5px;color:#32772f;transform:scaleX(0.9837);transform-origin:0 0;">Resources</div>
<div class="t" style="left:1291.93px;top:489.00px;font-size:34.5px;color:#32772f;transform:scaleX(0.9923);transform-origin:0 0;">Advanced</div>
<div class="t" style="left:1665.77px;top:489.00px;font-size:34.5px;color:#d3e2d2;letter-spacing:0.438px;">Notes</div>
<div class="t" style="left:180.27px;top:605.00px;font-size:34.5px;color:#050505;transform:scaleX(0.9650);transform-origin:0 0;">Name</div>
<div class="t" style="left:875.74px;top:604.00px;font-size:34.5px;color:#32772f;transform:scaleX(0.9851);transform-origin:0 0;">Texting</div>
<div class="t" style="left:1059.80px;top:605.00px;font-size:34.5px;color:#050505;transform:scaleX(0.9910);transform-origin:0 0;">Duration</div>
<div class="t" style="left:1483.65px;top:605.00px;font-size:34px;color:#32772f;">1</div>
<div class="t" style="left:1760.35px;top:605.00px;font-size:34.5px;color:#32772f;letter-spacing:0.674px;">days</div>
<div class="t" style="left:164.90px;top:696.00px;font-size:34.5px;color:#959a95;transform:scaleX(0.9890);transform-origin:0 0;">Notes</div>
<div class="t" style="left:175.53px;top:769.00px;font-size:34.5px;color:#32772f;letter-spacing:0.344px;">Autocorrecction</div>
<svg width="2048" height="1536" viewBox="0 0 2048 1536">
<rect x="1633" y="595" width="2" height="54" fill="#32772f"/>
<rect x="1485.4" y="630.8" width="6.8" height="4" fill="#fff"/><rect x="1495.3" y="630.8" width="6.6" height="4" fill="#fff"/>
<rect x="1572" y="621" width="31" height="3" fill="#32772f"/>
<rect x="1665.2" y="620" width="31" height="3" fill="#32772f"/>
<rect x="1679.2" y="606" width="3" height="31" fill="#32772f"/>
<rect x="427" y="764.3" width="4" height="43" rx="1.6" fill="#32772f"/>
<circle cx="176.80" cy="803.1" r="2.85" fill="#f04036"/>
<circle cx="184.81" cy="803.1" r="2.85" fill="#f04036"/>
<circle cx="192.82" cy="803.1" r="2.85" fill="#f04036"/>
<circle cx="200.83" cy="803.1" r="2.85" fill="#f04036"/>
<circle cx="208.84" cy="803.1" r="2.85" fill="#f04036"/>
<circle cx="216.85" cy="803.1" r="2.85" fill="#f04036"/>
<circle cx="224.86" cy="803.1" r="2.85" fill="#f04036"/>
<circle cx="232.87" cy="803.1" r="2.85" fill="#f04036"/>
<circle cx="240.88" cy="803.1" r="2.85" fill="#f04036"/>
<circle cx="248.89" cy="803.1" r="2.85" fill="#f04036"/>
<circle cx="256.90" cy="803.1" r="2.85" fill="#f04036"/>
<circle cx="264.91" cy="803.1" r="2.85" fill="#f04036"/>
<circle cx="272.92" cy="803.1" r="2.85" fill="#f04036"/>
<circle cx="280.93" cy="803.1" r="2.85" fill="#f04036"/>
<circle cx="288.94" cy="803.1" r="2.85" fill="#f04036"/>
<circle cx="296.95" cy="803.1" r="2.85" fill="#f04036"/>
<circle cx="304.96" cy="803.1" r="2.85" fill="#f04036"/>
<circle cx="312.97" cy="803.1" r="2.85" fill="#f04036"/>
<circle cx="320.98" cy="803.1" r="2.85" fill="#f04036"/>
<circle cx="328.99" cy="803.1" r="2.85" fill="#f04036"/>
<circle cx="337.00" cy="803.1" r="2.85" fill="#f04036"/>
<circle cx="345.01" cy="803.1" r="2.85" fill="#f04036"/>
<circle cx="353.02" cy="803.1" r="2.85" fill="#f04036"/>
<circle cx="361.03" cy="803.1" r="2.85" fill="#f04036"/>
<circle cx="369.04" cy="803.1" r="2.85" fill="#f04036"/>
<circle cx="377.05" cy="803.1" r="2.85" fill="#f04036"/>
<circle cx="385.06" cy="803.1" r="2.85" fill="#f04036"/>
<circle cx="393.07" cy="803.1" r="2.85" fill="#f04036"/>
<circle cx="401.08" cy="803.1" r="2.85" fill="#f04036"/>
<circle cx="409.09" cy="803.1" r="2.85" fill="#f04036"/>
<circle cx="417.10" cy="803.1" r="2.85" fill="#f04036"/>
</svg>
</div>
<div class="layer">
<div id="kb"></div>
<div class="t" style="left:563.06px;top:1470.00px;font-size:33.5px;color:#0a0a0c;letter-spacing:1.959px;">is</div>
<div class="t" style="left:993.25px;top:1470.00px;font-size:33.5px;color:#0a0a0c;letter-spacing:1.394px;">was</div>
<div class="t" style="left:1441.38px;top:1470.00px;font-size:33.5px;color:#0a0a0c;letter-spacing:2.110px;">has</div>
<svg width="2048" height="1536" viewBox="0 0 2048 1536">
<rect x="798" y="1455" width="2" height="52" fill="#b7b9c0"/>
<rect x="1246" y="1455" width="2" height="52" fill="#b7b9c0"/>
<rect x="1936" y="1456" width="4" height="52" fill="#b6b7bc"/>
<path d="M1967.6 1473.5 L1984 1490 L2000.2 1473.5" fill="none" stroke="#0a0a0c" stroke-width="2.8" stroke-linecap="round" stroke-linejoin="miter"/>
<path d="M61 1471.6 H78 A13.35 13.35 0 0 1 78 1498.3 H53.6" fill="none" stroke="#060608" stroke-width="2.6" stroke-linecap="round"/>
<path d="M50.2 1471.6 L62.2 1462.6 V1480.4 Z" fill="#060608"/>
<path d="M173 1471.6 H156.5 A13.35 13.35 0 0 0 156.5 1498.3 H181" fill="none" stroke="#8d8f96" stroke-width="2.6" stroke-linecap="butt"/>
<path d="M183.8 1471.6 L172.2 1462.6 V1480.4 Z" fill="#8d8f96"/>
<path d="M248.4 1465 H268.5 Q273 1465 273 1469.5 V1487.5 Q273 1492 268.5 1492 H265.8 V1471.6 H244.7 V1468.6 Q244.7 1465 248.4 1465 Z" fill="#060608"/>
<rect x="254" y="1461.8" width="11" height="6.8" rx="1" fill="#060608"/>
<rect x="256" y="1463.9" width="7" height="2.4" fill="#cfd1d8"/>
<rect x="238.5" y="1475" width="23.8" height="23.4" fill="none" stroke="#060608" stroke-width="3"/>
</svg>
</div>
</div></body></html>
